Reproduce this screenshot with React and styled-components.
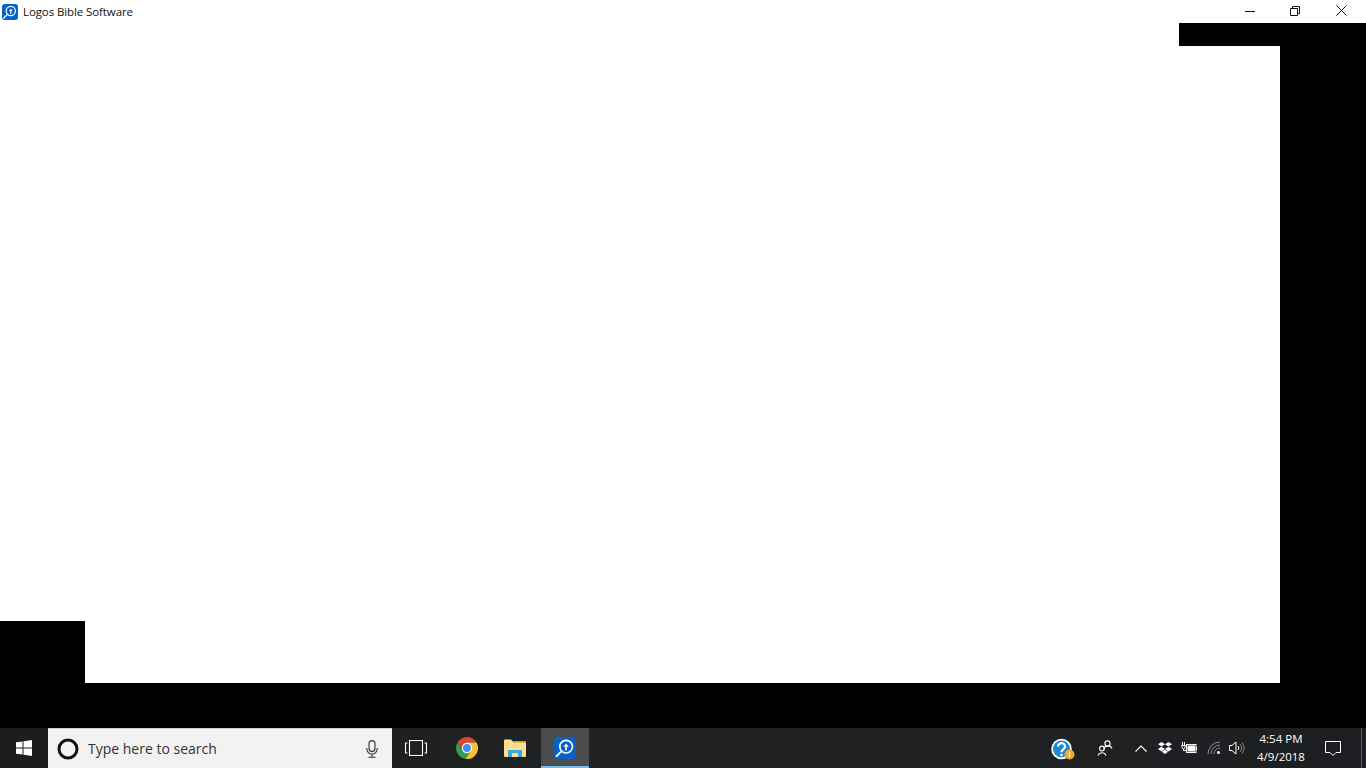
import React from "react";
import styled, { createGlobalStyle } from "styled-components";

const Global = createGlobalStyle`
  html, body { margin: 0; padding: 0; width: 100%; height: 100%; overflow: hidden; background: #000; }
  #root { width: 1366px; height: 768px; }
`;

const Screen = styled.div`
  width: 1366px; height: 768px; display: flex; flex-direction: column; background: #000;
  font-family: "Open Sans", "Noto Sans", sans-serif;
`;
const TitleBar = styled.header`
  height: 23px; background: #fff; display: flex; align-items: center; flex: none; padding-right: 2px; box-sizing: border-box;
`;
const AppIcon = styled.span`
  display: flex; margin-left: 2px; width: 16px; height: 16px;
`;
const AppTitle = styled.span`
  margin-left: 5px; font-size: 11.5px; color: #111; white-space: nowrap; letter-spacing: -0.1px; flex: 1;
`;
const WindowButton = styled.button`
  width: 46px; height: 21px; margin-bottom: 2px; border: 0; padding: 0; background: transparent;
  display: flex; align-items: center; justify-content: center;
`;
const MinimizeButton = styled(WindowButton)`
  padding-left: 2px;
`;
const Workspace = styled.main`
  flex: 1; display: flex; flex-direction: column;
`;
const Sheet = styled.div`
  background: #fff;
  height: ${p => p.$height}px;
  width: ${p => p.$width}px;
  margin-left: ${p => p.$left || 0}px;
`;
const Taskbar = styled.footer`
  height: 40px; flex: none; background: linear-gradient(90deg, #1c1d1f 0%, #202123 45%, #1f2123 75%, #1c1e21 100%);
  display: flex; align-items: stretch;
`;
const StartButton = styled.div`
  width: 48px; display: flex; align-items: center; justify-content: center;
`;
const SearchBox = styled.div`
  width: 344px; background: #f2f2f2; border-top: 1px solid #cfcfcf; box-sizing: border-box;
  display: flex; align-items: center; padding: 0 14px 0 9px;
`;
const Cortana = styled.span`
  width: 22px; height: 22px; display: flex; flex: none;
`;
const SearchText = styled.span`
  margin-left: 9px; flex: 1; font-size: 14px; color: #333; white-space: nowrap;
`;
const TaskSlot = styled.div`
  width: 48px; display: flex; align-items: center; justify-content: center; box-sizing: border-box;
  margin-left: ${p => p.$gap || 0}px;
  background: ${p => (p.$active ? "#4a4c4e" : "transparent")};
  border-bottom: ${p => (p.$active ? "2px solid #76b9ed" : "0")};
  padding-top: ${p => (p.$active ? "2px" : "0")};
`;
const Spacer = styled.div`flex: 1;`;
const TrayIcon = styled.div`
  width: ${p => p.$w}px; display: flex; align-items: center; justify-content: center; flex: none;
  margin-right: ${p => p.$after || 0}px;
  margin-left: ${p => p.$before || 0}px;
`;
const Clock = styled.div`
  width: 72px; display: flex; flex-direction: column; align-items: center; justify-content: center;
  color: #fff; font-size: 11.5px; line-height: 18px; box-sizing: border-box;
`;
const ShowDesktop = styled.div`
  width: 5px; border-left: 1px solid #5a5d60; box-sizing: border-box;
`;

const LogoGlyph = ({ size }) => (
  <svg width={size} height={size} viewBox="0 0 16 16">
    <rect width="16" height="16" rx="3" fill="#0662c8" />
    <circle cx="8.800" cy="7" r="4.600" fill="none" stroke="#fff" strokeWidth="1.200" />
    <path d="M5.500 10.300 1.800 14" stroke="#fff" strokeWidth="1.300" strokeLinecap="round" />
    <path d="M8.800 9.800V6.500" stroke="#fff" strokeWidth="1.200" />
    <path d="M6.900 7 8.800 4.700 10.700 7z" fill="#fff" />
  </svg>
);

export default function App() {
  return (
    <Screen>
      <Global />
      <TitleBar>
        <AppIcon><LogoGlyph size={16} /></AppIcon>
        <AppTitle>Logos Bible Software</AppTitle>
        <MinimizeButton aria-label="Minimize">
          <svg width="10" height="10"><path d="M0 5.500h10" stroke="#111" /></svg>
        </MinimizeButton>
        <WindowButton aria-label="Restore">
          <svg width="10" height="10" fill="none" stroke="#111"><path d="M.5 2.500h7v7h-7zM2.500 2.500v-2h7v7h-2" /></svg>
        </WindowButton>
        <WindowButton aria-label="Close">
          <svg width="11" height="11" stroke="#111"><path d="M.5.500l10 10M10.500.500l-10 10" /></svg>
        </WindowButton>
      </TitleBar>
      <Workspace>
        <Sheet $width={1179} $height={23} />
        <Sheet $width={1280} $height={575} />
        <Sheet $width={1195} $left={85} $height={62} />
      </Workspace>
      <Taskbar>
        <StartButton>
          <svg width="16" height="16" viewBox="0 0 16 16" fill="#fff">
            <path d="M0 2.300 6.500 1.400V7.500H0zM7.500 1.200 16 0V7.500H7.500zM0 8.500H6.500V14.600L0 13.700zM7.500 8.500H16V16L7.500 14.800z" />
          </svg>
        </StartButton>
        <SearchBox>
          <Cortana>
            <svg width="22" height="22"><circle cx="11" cy="11" r="9" fill="none" stroke="#111" strokeWidth="3" /></svg>
          </Cortana>
          <SearchText>Type here to search</SearchText>
          <svg width="12" height="18" viewBox="0 0 12 18" fill="none" stroke="#333" strokeWidth="1.100">
            <rect x="3" y=".6" width="6" height="11" rx="3" />
            <path d="M.8 8v1a5.200 5.200 0 0 0 10.400 0V8M6 14.500v2.500M2.500 17.300h7" />
          </svg>
        </SearchBox>
        <TaskSlot>
          <svg width="22" height="16" fill="none" stroke="#fff" strokeWidth="1.100">
            <rect x="4.500" y=".5" width="13" height="15" />
            <path d="M2.500 3H.5v10h2M19.500 3h2v10h-2" />
          </svg>
        </TaskSlot>
        <TaskSlot $gap={3}>
          <svg width="22" height="22" viewBox="0 0 22 22">
            <path d="M1.500 5.500A11 11 0 0 1 20.500 5.500H11L6.700 13.500z" fill="#db4437" />
            <path d="M1.500 5.500A11 11 0 0 0 9.500 21.900L14 16 6.700 13.500z" fill="#2e9f4e" />
            <path d="M20.500 5.500A11 11 0 0 1 9.500 21.900L15.300 13.500 11 5.500z" fill="#fbc02d" />
            <circle cx="11" cy="11" r="5.200" fill="#fff" />
            <circle cx="11" cy="11" r="4" fill="#4a89f3" />
          </svg>
        </TaskSlot>
        <TaskSlot>
          <svg width="22" height="18" viewBox="0 0 22 18">
            <path d="M0 1.500A1 1 0 0 1 1 .5h6l2 2h12a1 1 0 0 1 1 1V17a1 1 0 0 1-1 1H1a1 1 0 0 1-1-1z" fill="#fde08c" />
            <path d="M0 4h9l1.500-1.500H22V4H0z" fill="#e9b949" />
            <path d="M4 18v-7h14v7h-4v-4H8v4z" fill="#35a9e0" />
          </svg>
        </TaskSlot>
        <TaskSlot $active $gap={2}>
          <LogoGlyph size={22} />
        </TaskSlot>
        <Spacer />
        <TrayIcon $w={24} $after={22}>
          <svg width="24" height="24" viewBox="0 0 24 24" fill="none">
            <circle cx="10.500" cy="13" r="10.300" fill="#fff" />
            <circle cx="10.500" cy="13" r="8.500" fill="#1b8ad6" />
            <path d="M7 10.500a3.500 3.300 0 1 1 5.500 2.700c-1.200.9-2 1.400-2 3" stroke="#fff" strokeWidth="2.200" />
            <circle cx="10.500" cy="19" r="1.300" fill="#fff" />
            <circle cx="18.500" cy="18.500" r="5" fill="#f4a825" />
            <path d="M18.500 15.800v5.400" stroke="#fff" strokeWidth="1.400" />
          </svg>
        </TrayIcon>
        <TrayIcon $w={16} $after={21}>
          <svg width="16" height="16" fill="none" stroke="#fff" strokeWidth="1.100">
            <circle cx="10.500" cy="3.500" r="2.600" />
            <path d="M6.500 9.500A4.500 4.500 0 0 1 15 8.500" />
            <circle cx="5" cy="8.500" r="2.400" />
            <path d="M1 15.500a4.300 4.300 0 0 1 8 0" />
          </svg>
        </TrayIcon>
        <TrayIcon $w={14} $after={10}>
          <svg width="12" height="7" fill="none" stroke="#fff" strokeWidth="1.200"><path d="M.5 6.500 6 1l5.500 5.500" /></svg>
        </TrayIcon>
        <TrayIcon $w={14} $after={9}>
          <svg width="14" height="12" viewBox="0 0 14 12" fill="#fff">
            <path d="M3.500 0 7 2.300 3.500 4.600 0 2.300zM10.500 0 14 2.300l-3.500 2.300L7 2.300zM3.500 4.800 7 7.100 3.500 9.400 0 7.100zM10.500 4.800 14 7.100l-3.500 2.300L7 7.100zM7 7.700l3.200 2.100L7 12 3.800 9.800z" />
          </svg>
        </TrayIcon>
        <TrayIcon $w={16} $after={10}>
          <svg width="16" height="12" viewBox="0 0 16 12" fill="none" stroke="#fff">
            <rect x="5.500" y="2.500" width="9.500" height="8" />
            <rect x="6.500" y="3.500" width="7.500" height="6" fill="#fff" stroke="none" />
            <path d="M15.500 5v3" />
            <path d="M1.500 0v3M3.500 0v3M.5 3.500h4M1 3.500v2a1.500 1.500 0 0 0 3 0v-2M2.500 7v1.500h3" />
          </svg>
        </TrayIcon>
        <TrayIcon $w={14} $after={8}>
          <svg width="14" height="14" viewBox="0 0 14 14" fill="none" stroke="#8a8c8e" strokeWidth="1">
            <path d="M1 13A12 12 0 0 1 13 1M4 13A9 9 0 0 1 13 4M7 13A6 6 0 0 1 13 7" />
            <circle cx="11.500" cy="11.500" r="1.500" fill="#fff" stroke="none" />
          </svg>
        </TrayIcon>
        <TrayIcon $w={16}>
          <svg width="16" height="14" viewBox="0 0 16 14" fill="none" stroke="#fff">
            <path d="M.5 4.500h2.500L7 1v12L3 9.500H.5z" />
            <path d="M9 5a3 3 0 0 1 0 4" />
            <path d="M11 3a6 6 0 0 1 0 8M13 1.500a9 9 0 0 1 0 11" stroke="#8a8c8e" />
          </svg>
        </TrayIcon>
        <Clock>
          <span>4:54 PM</span>
          <span>4/9/2018</span>
        </Clock>
        <TrayIcon $w={16} $before={8} $after={20}>
          <svg width="16" height="15" fill="none" stroke="#fff"><path d="M.5.500h15v11h-4.500L8 14.500 5 11.500H.5z" /></svg>
        </TrayIcon>
        <ShowDesktop />
      </Taskbar>
    </Screen>
  );
}
